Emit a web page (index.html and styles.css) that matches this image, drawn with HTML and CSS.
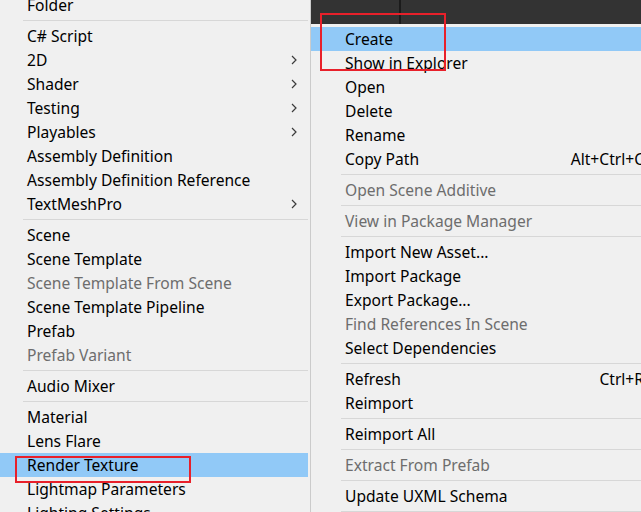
FILE: index.html
```html
<!DOCTYPE html>
<html>
<head>
<meta charset="utf-8">
<link rel="stylesheet" href="styles.css">
</head>
<body>
<div class="screen">
  <div class="left-menu">
    <div class="item">Folder</div>
    <div class="sep"></div>
    <div class="item">C# Script</div>
    <div class="item sub">2D<svg class="chev" width="6" height="10" viewBox="0 0 6 10"><polyline points="1,1 5,5 1,9"/></svg></div>
    <div class="item sub">Shader<svg class="chev" width="6" height="10" viewBox="0 0 6 10"><polyline points="1,1 5,5 1,9"/></svg></div>
    <div class="item sub">Testing<svg class="chev" width="6" height="10" viewBox="0 0 6 10"><polyline points="1,1 5,5 1,9"/></svg></div>
    <div class="item sub">Playables<svg class="chev" width="6" height="10" viewBox="0 0 6 10"><polyline points="1,1 5,5 1,9"/></svg></div>
    <div class="item">Assembly Definition</div>
    <div class="item">Assembly Definition Reference</div>
    <div class="item sub">TextMeshPro<svg class="chev" width="6" height="10" viewBox="0 0 6 10"><polyline points="1,1 5,5 1,9"/></svg></div>
    <div class="sep"></div>
    <div class="item">Scene</div>
    <div class="item">Scene Template</div>
    <div class="item disabled">Scene Template From Scene</div>
    <div class="item">Scene Template Pipeline</div>
    <div class="item">Prefab</div>
    <div class="item disabled">Prefab Variant</div>
    <div class="sep"></div>
    <div class="item">Audio Mixer</div>
    <div class="sep"></div>
    <div class="item">Material</div>
    <div class="item">Lens Flare</div>
    <div class="item hl">Render Texture</div>
    <div class="item">Lightmap Parameters</div>
    <div class="item">Lighting Settings</div>
  </div>
  <div class="right">
    <div class="topbar"><div class="divider"></div></div>
    <div class="ctx-menu">
      <div class="item hl">Create</div>
      <div class="item">Show in Explorer</div>
      <div class="item">Open</div>
      <div class="item">Delete</div>
      <div class="item">Rename</div>
      <div class="item">Copy Path<span class="key">Alt+Ctrl+C</span></div>
      <div class="sep"></div>
      <div class="item disabled">Open Scene Additive</div>
      <div class="sep"></div>
      <div class="item disabled">View in Package Manager</div>
      <div class="sep"></div>
      <div class="item">Import New Asset...</div>
      <div class="item">Import Package</div>
      <div class="item">Export Package...</div>
      <div class="item disabled">Find References In Scene</div>
      <div class="item">Select Dependencies</div>
      <div class="sep"></div>
      <div class="item">Refresh<span class="key">Ctrl+R</span></div>
      <div class="item">Reimport</div>
      <div class="sep"></div>
      <div class="item">Reimport All</div>
      <div class="sep"></div>
      <div class="item disabled">Extract From Prefab</div>
      <div class="sep"></div>
      <div class="item">Update UXML Schema</div>
      <div class="sep"></div>
    </div>
  </div>
  <div class="mark mark-create"></div>
  <div class="mark mark-render"></div>
</div>
</body>
</html>
```
FILE: styles.css
```css
html, body {
  margin: 0;
  padding: 0;
  width: 641px;
  height: 512px;
  overflow: hidden;
  background: #f0f0f0;
}
.screen {
  position: relative;
  display: flex;
  width: 641px;
  height: 512px;
  overflow: hidden;
  font-family: "Noto Sans", "Open Sans", sans-serif;
  font-size: 15.6px;
  color: #000;
}
.left-menu {
  flex: 0 0 310px;
  margin-top: -7px;
  border-right: 1px solid #cbcbcb;
  background: #f0f0f0;
}
.left-menu .item {
  display: flex;
  align-items: center;
  height: 24px;
  line-height: 24px;
  padding: 0 11px 0 27px;
  margin-right: 2px;
  white-space: nowrap;
}
.left-menu .sep {
  height: 1px;
  background: #d7d7d7;
  margin: 3px 2px 3px 23px;
}
.chev {
  margin-left: auto;
  fill: none;
  stroke: #3c3c3c;
  stroke-width: 1.2;
}
.item.hl {
  background: #91c9f7;
}
.item.disabled {
  color: #6d6d6d;
}
.right {
  flex: 1 1 auto;
  display: flex;
  flex-direction: column;
  min-width: 0;
}
.topbar {
  height: 24px;
  flex: 0 0 24px;
  background: #333333;
  display: flex;
}
.topbar .divider {
  width: 2px;
  margin-left: 88px;
  background: #1b1b1b;
}
.ctx-menu {
  padding-top: 3px;
  width: 340px;
  background: #f0f0f0;
}
.ctx-menu .item {
  display: flex;
  align-items: center;
  height: 24px;
  line-height: 24px;
  padding: 0 7px 0 34px;
  white-space: nowrap;
}
.ctx-menu .key {
  margin-left: auto;
}
.ctx-menu .sep {
  height: 1px;
  background: #d7d7d7;
  margin: 3px 0 3px 30px;
}
.mark {
  position: absolute;
  border: 2px solid #e8202a;
  box-sizing: border-box;
}
.mark-create {
  left: 320px;
  top: 13px;
  width: 126px;
  height: 58px;
}
.mark-render {
  left: 15px;
  top: 456px;
  width: 176px;
  height: 27px;
}
```
